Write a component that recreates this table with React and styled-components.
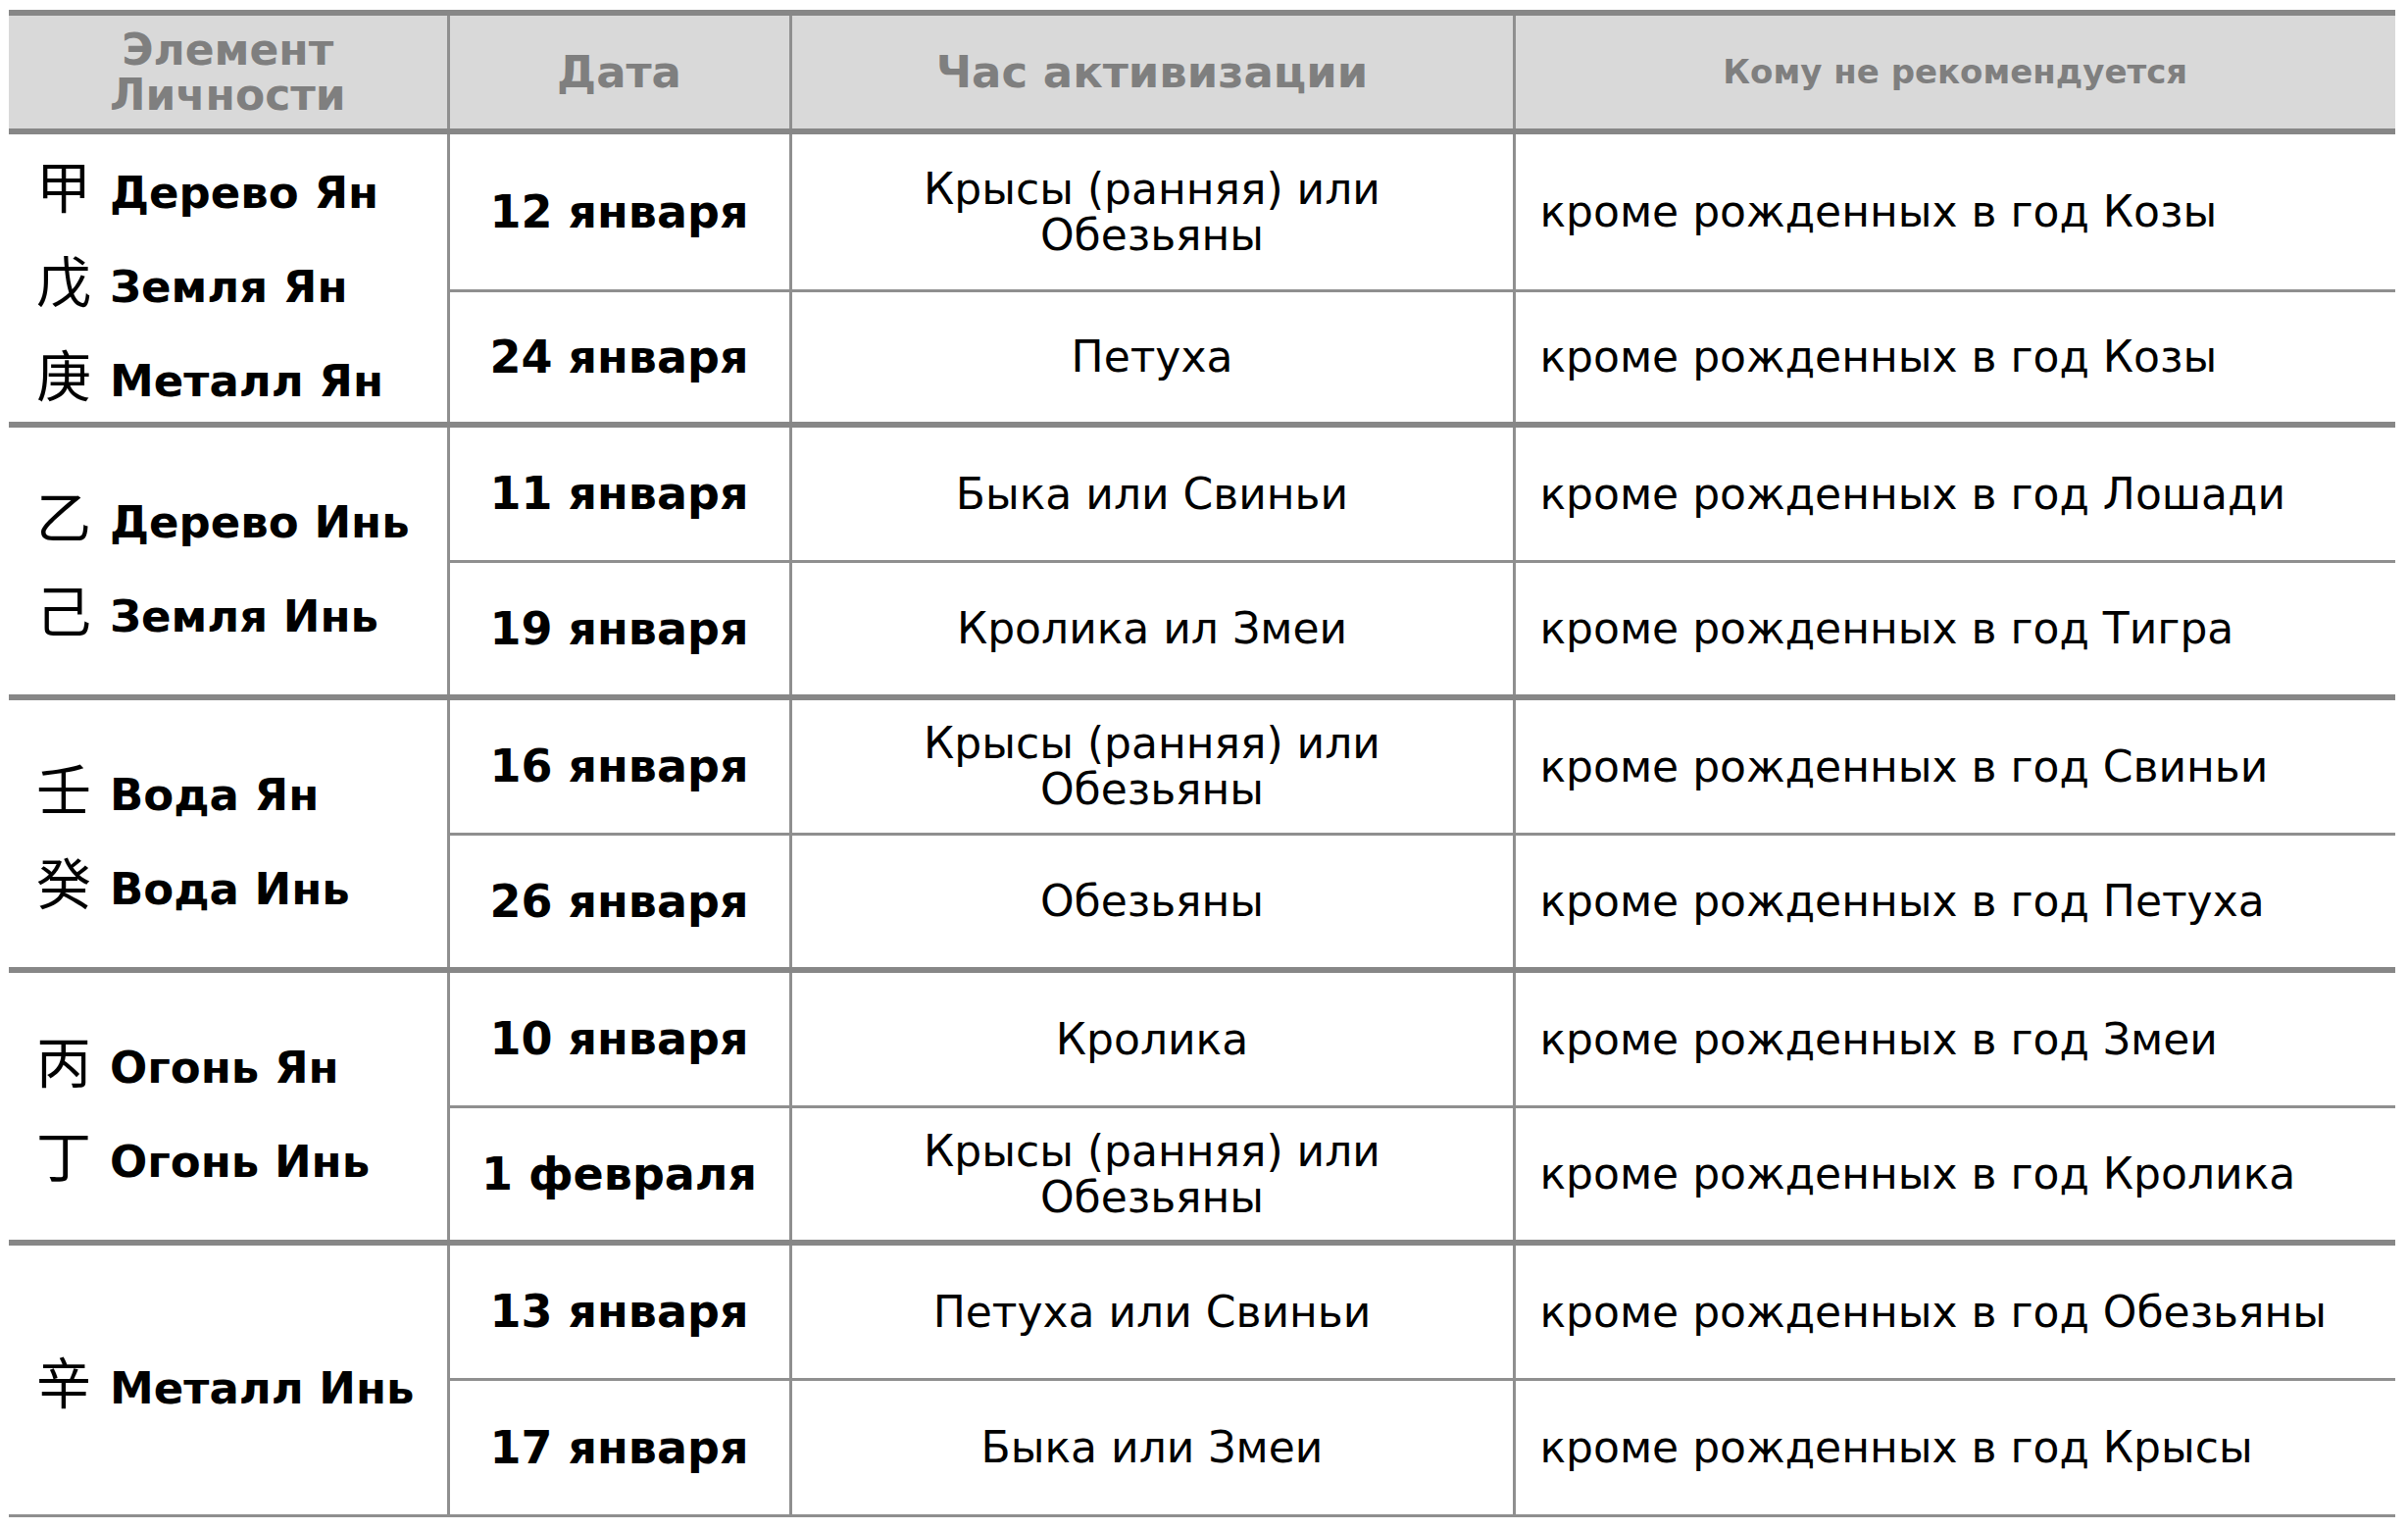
import React from "react";
import styled, { createGlobalStyle } from "styled-components";

const groups = [
    {
        elements: [
            ["甲", "Дерево Ян"],
            ["戊", "Земля Ян"],
            ["庚", "Металл Ян"],
        ],
        rows: [
            { date: "12 января", hour: ["Крысы (ранняя) или", "Обезьяны"], note: "кроме рожденных в год Козы", h: 162 },
            { date: "24 января", hour: ["Петуха"], note: "кроме рожденных в год Козы", h: 137 },
        ],
    },
    {
        elements: [
            ["乙", "Дерево Инь"],
            ["己", "Земля Инь"],
        ],
        rows: [
            { date: "11 января", hour: ["Быка или Свиньи"], note: "кроме рожденных в год Лошади" },
            { date: "19 января", hour: ["Кролика ил Змеи"], note: "кроме рожденных в год Тигра" },
        ],
    },
    {
        elements: [
            ["壬", "Вода Ян"],
            ["癸", "Вода Инь"],
        ],
        rows: [
            { date: "16 января", hour: ["Крысы (ранняя) или", "Обезьяны"], note: "кроме рожденных в год Свиньи" },
            { date: "26 января", hour: ["Обезьяны"], note: "кроме рожденных в год Петуха" },
        ],
    },
    {
        elements: [
            ["丙", "Огонь Ян"],
            ["丁", "Огонь Инь"],
        ],
        rows: [
            { date: "10 января", hour: ["Кролика"], note: "кроме рожденных в год Змеи" },
            { date: "1 февраля", hour: ["Крысы (ранняя) или", "Обезьяны"], note: "кроме рожденных в год Кролика" },
        ],
    },
    {
        elements: [["辛", "Металл Инь"]],
        rows: [
            { date: "13 января", hour: ["Петуха или Свиньи"], note: "кроме рожденных в год Обезьяны" },
            { date: "17 января", hour: ["Быка или Змеи"], note: "кроме рожденных в год Крысы" },
        ],
    },
];

const App = () => {
    return (
        <>
            <GlobalStyle />
            <Page>
                <Table>
                    <colgroup>
                        <col style={{ width: 448 }} />
                        <col style={{ width: 349 }} />
                        <col style={{ width: 738 }} />
                        <col style={{ width: 899 }} />
                    </colgroup>
                    <thead>
                        <HeadRow>
                            <HeadCell>
                                Элемент
                                <br />
                                Личности
                            </HeadCell>
                            <HeadCell>Дата</HeadCell>
                            <HeadCell>Час активизации</HeadCell>
                            <HeadCell $small>Кому не рекомендуется</HeadCell>
                        </HeadRow>
                    </thead>
                    <tbody>
                        {groups.map((group, gi) =>
                            group.rows.map((row, ri) => (
                                <DataRow key={`${gi}-${ri}`} $h={row.h || 139} $groupStart={ri === 0 && gi > 0} $inner={ri > 0}>
                                    {ri === 0 && (
                                        <ElementCell rowSpan={group.rows.length}>
                                            <ElementList>
                                                {group.elements.map(([han, label]) => (
                                                    <ElementLine key={label}>
                                                        <Han>{han}</Han>
                                                        <ElementLabel>{label}</ElementLabel>
                                                    </ElementLine>
                                                ))}
                                            </ElementList>
                                        </ElementCell>
                                    )}
                                    <DateCell>{row.date}</DateCell>
                                    <HourCell>
                                        {row.hour.map((line, li) => (
                                            <HourLine key={li}>{line}</HourLine>
                                        ))}
                                    </HourCell>
                                    <NoteCell>{row.note}</NoteCell>
                                </DataRow>
                            ))
                        )}
                    </tbody>
                </Table>
            </Page>
        </>
    );
};

export default App;

// Styled Components
const GlobalStyle = createGlobalStyle`
    html, body {
        margin: 0;
        padding: 0;
        background: #ffffff;
    }
    body {
        font-family: "DejaVu Sans", Verdana, sans-serif;
        color: #000;
    }
`;

const Page = styled.div`
    width: 2456px;
    height: 1560px;
    padding: 10px 0 0 9px;
    box-sizing: border-box;
    background: #ffffff;
`;

const Table = styled.table`
    width: 2434px;
    table-layout: fixed;
    border-collapse: collapse;
    border-top: 6px solid #878787;
    border-bottom: 3px solid #8f8f8f;
`;

const HeadRow = styled.tr`
    height: 121px;
    background: #d9d9d9;
`;

const HeadCell = styled.th`
    padding: 0 10px;
    font-family: "DejaVu Sans", Verdana, sans-serif;
    font-weight: bold;
    font-size: ${(p) => (p.$small ? "34px" : "45px")};
    line-height: 53px;
    color: #7f7f7f;
    text-align: center;
    vertical-align: middle;
    border-bottom: 6px solid #878787;
    border-left: 3px solid #8f8f8f;

    &:first-child {
        border-left: none;
        font-size: 44px;
        line-height: 46px;
    }
`;

const DataRow = styled.tr`
    height: ${(p) => p.$h}px;

    & > td {
        border-top: ${(p) => (p.$groupStart ? "6px solid #878787" : p.$inner ? "3px solid #8f8f8f" : "none")};
    }
`;

const BaseCell = styled.td`
    padding: 0;
    vertical-align: middle;
    border-left: 3px solid #8f8f8f;
`;

const ElementCell = styled(BaseCell)`
    border-left: none;
    padding-left: 28px;
`;

const ElementList = styled.div`
    display: flex;
    flex-direction: column;
`;

const ElementLine = styled.div`
    display: flex;
    align-items: baseline;
    gap: 19px;
    height: 96px;
    line-height: 96px;
`;

const Han = styled.span`
    font-family: "Noto Sans CJK SC", "Noto Sans CJK JP", sans-serif;
    font-size: 56px;
    font-weight: 400;
    width: 56px;
`;

const ElementLabel = styled.span`
    font-family: "DejaVu Sans", Verdana, sans-serif;
    font-weight: bold;
    font-size: 45px;
`;

const DateCell = styled(BaseCell)`
    text-align: center;
    font-weight: bold;
    font-size: 46px;
`;

const HourCell = styled(BaseCell)`
    text-align: center;
    font-size: 44px;
`;

const HourLine = styled.div`
    height: 47px;
    line-height: 51px;
    display: flex;
    align-items: center;
    justify-content: center;
`;

const NoteCell = styled(BaseCell)`
    padding-left: 25px;
    text-align: left;
    font-size: 44px;
    white-space: nowrap;
`;
